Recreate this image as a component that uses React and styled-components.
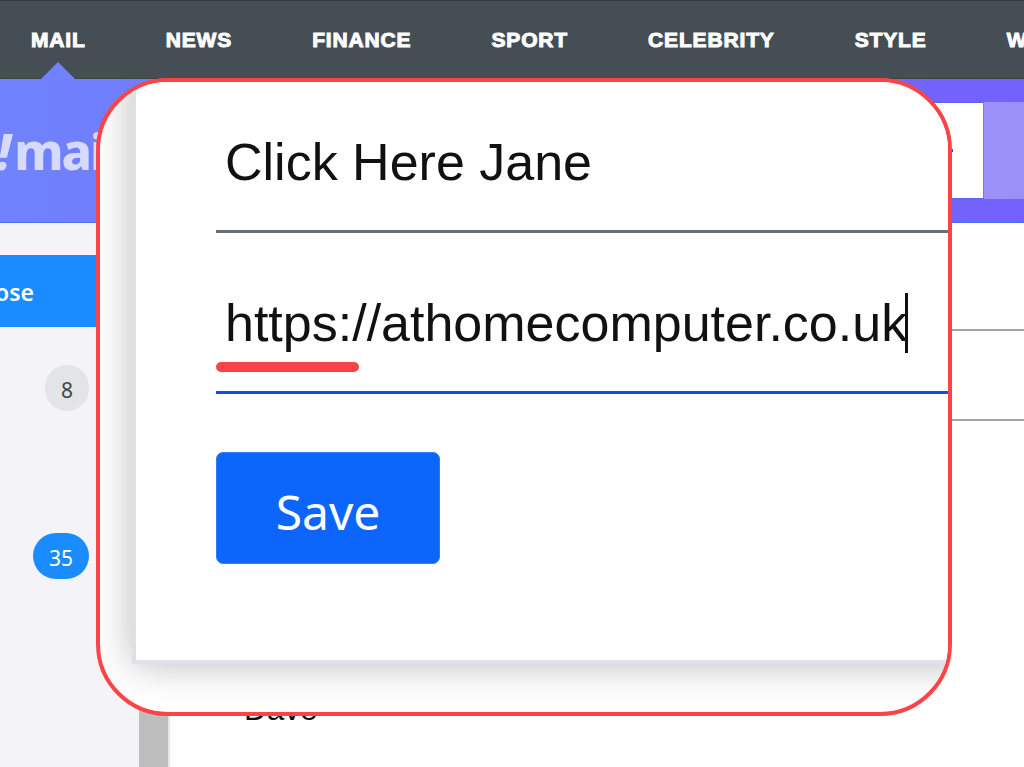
import React from 'react'
import styled, { createGlobalStyle } from 'styled-components'

const GlobalStyle = createGlobalStyle`
  html, body {
    margin: 0;
    height: 100%;
    overflow: hidden;
    background: #fff;
  }
  #root {
    height: 100%;
  }
`

const Page = styled.div`
  position: relative;
  height: 767px;
  overflow: hidden;
  display: flex;
  flex-direction: column;
  font-family: "Liberation Sans", Arial, sans-serif;
`

// top navigation
const Nav = styled.nav`
  flex: none;
  box-sizing: border-box;
  height: 79px;
  padding: 0 0 0 31px;
  display: flex;
  align-items: stretch;
  gap: 80px;
  background: #464e55;
  border-top: 1px solid #33383c;
  border-bottom: 1px solid #3c423f;
  white-space: nowrap;
`
const NavItem = styled.a`
  position: relative;
  display: flex;
  align-items: center;
  padding-top: 1px;
  color: #fff;
  font-size: 21px;
  font-weight: 700;
  letter-spacing: 0.85px;
  -webkit-text-stroke: 1px #fff;
  ${(p) => p.$active && `
    &::after {
      content: "";
      position: absolute;
      left: 10px;
      bottom: -1px;
      width: 34px;
      height: 17px;
      background: #7082fd;
      clip-path: polygon(50% 0, 100% 100%, 0 100%);
    }
  `}
`

// purple band with logo and search
const Band = styled.header`
  flex: none;
  box-sizing: border-box;
  height: 144px;
  display: flex;
  align-items: center;
  justify-content: space-between;
  background: linear-gradient(90deg, #7082fd 0%, #6f70fb 60%, #7361fb 100%);
  border-bottom: 1px solid #4f6cf5;
`
const Logo = styled.div`
  width: 117px;
  height: 100%;
  display: flex;
  align-items: center;
  justify-content: flex-end;
  overflow: hidden;
  color: #d6dafe;
  font-family: "Noto Sans", sans-serif;
  font-size: 50px;
  font-weight: 800;
  letter-spacing: -2px;
  white-space: nowrap;
`
const LogoMark = styled.span`
  font-style: italic;
  margin-right: 5px;
`
const Search = styled.div`
  display: flex;
  height: 97px;
  width: 140px;
`
const SearchField = styled.div`
  flex: 1;
  background: #fff;
  border-top: 1px solid #5b63f2;
  border-bottom: 1px solid #5b63f2;
  display: flex;
  align-items: center;
  justify-content: flex-end;
  padding-right: 30px;
`
const SearchDot = styled.span`
  width: 2px;
  height: 3px;
  background: #2a55e8;
`
const SearchButton = styled.div`
  box-sizing: border-box;
  width: 41px;
  background: #9b90f8;
  border-left: 1px solid #7a70f0;
`

// mail layout underneath
const Body = styled.div`
  flex: 1;
  display: grid;
  grid-template-columns: 139px 29px 1fr;
  min-height: 0;
`
const Sidebar = styled.aside`
  background: #f3f3f8;
  padding-top: 32px;
  display: flex;
  flex-direction: column;
  align-items: flex-end;
`
const Compose = styled.div`
  align-self: stretch;
  height: 72px;
  display: flex;
  align-items: center;
  justify-content: flex-end;
  padding: 2px 105px 0 0;
  box-sizing: border-box;
  background: #1a8cff;
  color: #fff;
  font-family: "Noto Sans", sans-serif;
  font-size: 23px;
  font-weight: 600;
  white-space: nowrap;
`
const Badge = styled.span`
  box-sizing: border-box;
  height: 46px;
  min-width: 44px;
  margin-top: ${(p) => p.$gap}px;
  margin-right: 50px;
  padding: 3px 16px 0;
  display: flex;
  align-items: center;
  justify-content: center;
  border-radius: 23px;
  background: ${(p) => (p.$primary ? '#1a8cff' : '#e2e4e8')};
  color: ${(p) => (p.$primary ? '#fff' : '#40464d')};
  font-family: "Noto Sans", sans-serif;
  font-size: 21px;
`
const Gutter = styled.div`
  background: #bdbdbd;
`
const Content = styled.main`
  background: #fff;
  border-left: 2px solid #e6e6ea;
  padding-top: 18px;
`
const Row = styled.div`
  height: 88px;
  border-bottom: 2px solid #a0a5ad;
`
const Sender = styled.div`
  margin: 270px 0 0 74px;
  font-size: 31.5px;
  line-height: 36px;
  color: #111;
`

// magnified dialog on top of the page
const Magnifier = styled.section`
  position: absolute;
  left: 96px;
  top: 78px;
  box-sizing: border-box;
  width: 856px;
  height: 638px;
  overflow: hidden;
  background: #fff;
  border: 4px solid #fb4348;
  border-radius: 72px;
`
const Dialog = styled.div`
  box-sizing: border-box;
  width: 900px;
  margin: -20px 0 0 32px;
  padding: 70px 0 96px 80px;
  background: #fff;
  border-left: 4px solid #dde0e5;
  border-bottom: 4px solid #dfe2ea;
  box-shadow: 0 0 38px rgba(0, 0, 0, 0.27);
`
const Field = styled.div`
  position: relative;
  display: flex;
  align-items: center;
  height: 60px;
  padding: ${(p) => (p.$first ? 0 : '60px')} 0 38px 9px;
  border-bottom: 3px solid ${(p) => (p.$focused ? '#0f4cf7' : '#686e79')};
  color: #111;
  font-size: 52px;
  line-height: 60px;
  white-space: nowrap;
`
const Caret = styled.span`
  flex: none;
  width: 3px;
  height: 60px;
  margin-left: -2px;
  background: #111;
`
const Underline = styled.span`
  position: absolute;
  left: 0;
  top: 129px;
  width: 143px;
  height: 10px;
  border-radius: 5px;
  background: #fb4348;
`
const SaveButton = styled.button`
  display: block;
  width: 224px;
  height: 112px;
  margin-top: 58px;
  padding: 7px 0 0;
  border: 1px solid #3a78f5;
  border-radius: 7px;
  background: #0d66fb;
  color: #fff;
  font-family: "Noto Sans", sans-serif;
  font-size: 48px;
`

export default function App() {
  const links = ['MAIL', 'NEWS', 'FINANCE', 'SPORT', 'CELEBRITY', 'STYLE', 'WEATHER']
  return (
    <Page>
      <GlobalStyle />
      <Nav>
        {links.map((l, i) => (
          <NavItem key={l} $active={i === 0}>{l}</NavItem>
        ))}
      </Nav>
      <Band>
        <Logo><LogoMark>!</LogoMark>mail</Logo>
        <Search>
          <SearchField><SearchDot /></SearchField>
          <SearchButton />
        </Search>
      </Band>
      <Body>
        <Sidebar>
          <Compose>Compose</Compose>
          <Badge $gap={38}>8</Badge>
          <Badge $gap={122} $primary>35</Badge>
        </Sidebar>
        <Gutter />
        <Content>
          <Row />
          <Row />
          <Sender>Dave</Sender>
        </Content>
      </Body>
      <Magnifier>
        <Dialog>
          <Field $first>Click Here Jane</Field>
          <Field $focused>
            https://athomecomputer.co.uk
            <Caret />
            <Underline />
          </Field>
          <SaveButton>Save</SaveButton>
        </Dialog>
      </Magnifier>
    </Page>
  )
}
